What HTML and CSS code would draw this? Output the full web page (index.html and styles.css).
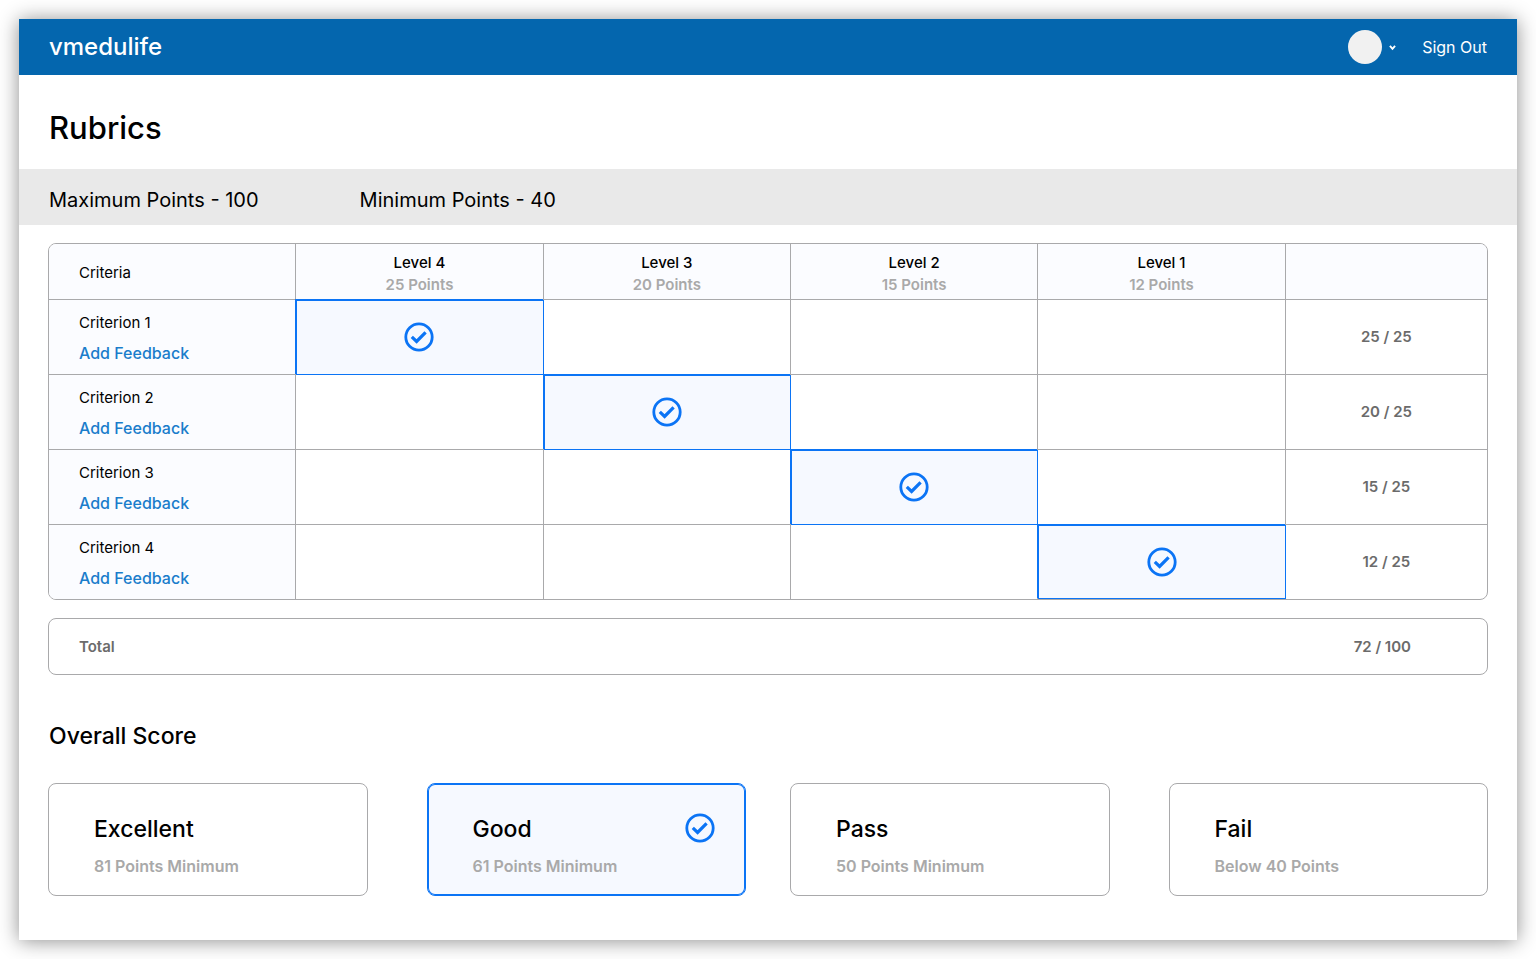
FILE: index.html
```
<!DOCTYPE html>
<html lang="en">
<head>
    <meta charset="UTF-8">
    <meta name="viewport" content="width=device-width, initial-scale=1.0">
    <title>Rubrics - vmedulife</title>
    <link rel="stylesheet" href="styles.css">
</head>
<body>
    <svg class="sprite" aria-hidden="true">
        <symbol id="check" viewBox="0 0 30 30">
            <circle cx="15" cy="15" r="13.2" />
            <path d="M7.8 14.8 L12.6 19.4 L21.6 10.4" stroke-width="3.2" />
        </symbol>
    </svg>

    <div class="page">
        <header class="topbar">
            <a href="#" class="brand">vmedulife</a>
            <nav class="account">
                <button type="button" class="profile" aria-label="Profile menu">
                    <span class="avatar"></span>
                    <svg class="caret" viewBox="0 0 6 6"><path d="M0.8 1.6 L3 4.2 L5.2 1.6" /></svg>
                </button>
                <a href="#" class="sign-out">Sign Out</a>
            </nav>
        </header>

        <main>
            <h1>Rubrics</h1>

            <div class="points-bar">
                <p>Maximum Points - 100</p>
                <p>Minimum Points - 40</p>
            </div>

            <div class="content">
                <table class="rubric">
                    <colgroup>
                        <col><col><col><col><col>
                        <col class="score-col">
                    </colgroup>
                    <thead>
                        <tr>
                            <th class="criterion" scope="col">Criteria</th>
                            <th scope="col">Level 4<span class="points">25 Points</span></th>
                            <th scope="col">Level 3<span class="points">20 Points</span></th>
                            <th scope="col">Level 2<span class="points">15 Points</span></th>
                            <th scope="col">Level 1<span class="points">12 Points</span></th>
                            <th></th>
                        </tr>
                    </thead>
                    <tbody>
                        <tr>
                            <th class="criterion" scope="row">Criterion 1<a href="#">Add Feedback</a></th>
                            <td><label class="level"><input type="radio" name="c1" aria-label="Level 4" checked><svg class="check"><use href="#check" /></svg></label></td>
                            <td><label class="level"><input type="radio" name="c1" aria-label="Level 3"><svg class="check"><use href="#check" /></svg></label></td>
                            <td><label class="level"><input type="radio" name="c1" aria-label="Level 2"><svg class="check"><use href="#check" /></svg></label></td>
                            <td><label class="level"><input type="radio" name="c1" aria-label="Level 1"><svg class="check"><use href="#check" /></svg></label></td>
                            <td class="score">25 / 25</td>
                        </tr>
                        <tr>
                            <th class="criterion" scope="row">Criterion 2<a href="#">Add Feedback</a></th>
                            <td><label class="level"><input type="radio" name="c2" aria-label="Level 4"><svg class="check"><use href="#check" /></svg></label></td>
                            <td><label class="level"><input type="radio" name="c2" aria-label="Level 3" checked><svg class="check"><use href="#check" /></svg></label></td>
                            <td><label class="level"><input type="radio" name="c2" aria-label="Level 2"><svg class="check"><use href="#check" /></svg></label></td>
                            <td><label class="level"><input type="radio" name="c2" aria-label="Level 1"><svg class="check"><use href="#check" /></svg></label></td>
                            <td class="score">20 / 25</td>
                        </tr>
                        <tr>
                            <th class="criterion" scope="row">Criterion 3<a href="#">Add Feedback</a></th>
                            <td><label class="level"><input type="radio" name="c3" aria-label="Level 4"><svg class="check"><use href="#check" /></svg></label></td>
                            <td><label class="level"><input type="radio" name="c3" aria-label="Level 3"><svg class="check"><use href="#check" /></svg></label></td>
                            <td><label class="level"><input type="radio" name="c3" aria-label="Level 2" checked><svg class="check"><use href="#check" /></svg></label></td>
                            <td><label class="level"><input type="radio" name="c3" aria-label="Level 1"><svg class="check"><use href="#check" /></svg></label></td>
                            <td class="score">15 / 25</td>
                        </tr>
                        <tr>
                            <th class="criterion" scope="row">Criterion 4<a href="#">Add Feedback</a></th>
                            <td><label class="level"><input type="radio" name="c4" aria-label="Level 4"><svg class="check"><use href="#check" /></svg></label></td>
                            <td><label class="level"><input type="radio" name="c4" aria-label="Level 3"><svg class="check"><use href="#check" /></svg></label></td>
                            <td><label class="level"><input type="radio" name="c4" aria-label="Level 2"><svg class="check"><use href="#check" /></svg></label></td>
                            <td><label class="level"><input type="radio" name="c4" aria-label="Level 1" checked><svg class="check"><use href="#check" /></svg></label></td>
                            <td class="score">12 / 25</td>
                        </tr>
                    </tbody>
                </table>

                <div class="total">
                    <span>Total</span>
                    <span>72 / 100</span>
                </div>

                <h2>Overall Score</h2>

                <div class="grades">
                    <div class="grade-pair">
                        <label class="grade">
                            <input type="radio" name="grade">
                            <span class="grade-text">
                                <span class="grade-name">Excellent</span>
                                <span class="grade-min">81 Points Minimum</span>
                            </span>
                            <svg class="check"><use href="#check" /></svg>
                        </label>
                        <label class="grade">
                            <input type="radio" name="grade" checked>
                            <span class="grade-text">
                                <span class="grade-name">Good</span>
                                <span class="grade-min">61 Points Minimum</span>
                            </span>
                            <svg class="check"><use href="#check" /></svg>
                        </label>
                    </div>
                    <div class="grade-pair">
                        <label class="grade">
                            <input type="radio" name="grade">
                            <span class="grade-text">
                                <span class="grade-name">Pass</span>
                                <span class="grade-min">50 Points Minimum</span>
                            </span>
                            <svg class="check"><use href="#check" /></svg>
                        </label>
                        <label class="grade">
                            <input type="radio" name="grade">
                            <span class="grade-text">
                                <span class="grade-name">Fail</span>
                                <span class="grade-min">Below 40 Points</span>
                            </span>
                            <svg class="check"><use href="#check" /></svg>
                        </label>
                    </div>
                </div>
            </div>
        </main>
    </div>
</body>
</html>
```
FILE: styles.css
```
* {
    margin: 0;
    padding: 0;
    box-sizing: border-box;
}

body {
    font-family: "Inter", sans-serif;
    font-size: 15px;
    line-height: 22px;
    color: #000;
    background-color: #fff;
    padding: 19px;
}

a {
    text-decoration: none;
}

.sprite {
    position: absolute;
    width: 0;
    height: 0;
}

.page {
    background-color: #fff;
    box-shadow: 0 1px 19px rgba(0, 0, 0, 0.45);
    padding-bottom: 44px;
}

/* top bar */
.topbar {
    display: flex;
    align-items: center;
    justify-content: space-between;
    height: 56px;
    padding: 0 30px;
    background-color: #0466ae;
}

.brand {
    color: #fff;
    font-size: 24px;
    font-weight: 500;
}

.account {
    display: flex;
    align-items: center;
    gap: 26px;
}

.profile {
    display: flex;
    align-items: center;
    gap: 7px;
    background: none;
    border: none;
    cursor: pointer;
}

.avatar {
    width: 34px;
    height: 34px;
    border-radius: 50%;
    background-color: #f1f1f1;
}

.caret {
    width: 7px;
    height: 7px;
    fill: none;
    stroke: #fff;
    stroke-width: 1.6;
}

.sign-out {
    color: #fff;
    font-size: 16px;
}

h1 {
    padding: 33px 30px 21px;
    font-size: 31px;
    font-weight: 500;
    line-height: 40px;
}

.points-bar {
    display: flex;
    align-items: center;
    gap: 101px;
    height: 56px;
    padding: 5px 30px 0;
    background-color: #e9e9e9;
    font-size: 20px;
}

.content {
    padding: 18px 29px 0;
}

/* rubric table */
.rubric {
    width: 100%;
    table-layout: fixed;
    border-collapse: separate;
    border-spacing: 0;
    border: 1px solid #a9a9ab;
    border-radius: 8px;
    overflow: hidden;
}

.score-col {
    width: 14%;
}

.rubric th,
.rubric td {
    border-right: 1px solid #a9a9ab;
    border-bottom: 1px solid #a9a9ab;
}

.rubric th:last-child,
.rubric td:last-child {
    border-right: none;
}

.rubric tbody tr:last-child > * {
    border-bottom: none;
}

.rubric th {
    background-color: #fbfcff;
    font-weight: 500;
}

.rubric thead th {
    height: 56px;
    padding-top: 4px;
}

.rubric .criterion {
    padding-top: 2px;
    padding-left: 30px;
    text-align: left;
    font-weight: 400;
}

.rubric .criterion a {
    display: block;
    margin-top: 8px;
    color: #1a7dcb;
    font-size: 16px;
    font-weight: 500;
}

.points {
    display: block;
    color: #a9a9a9;
    font-weight: 600;
}

.level {
    position: relative;
    display: flex;
    align-items: center;
    justify-content: center;
    height: 74px;
    cursor: pointer;
}

.level input,
.grade input {
    position: absolute;
    inset: 0;
    width: 100%;
    height: 100%;
    opacity: 0;
    cursor: pointer;
}

.rubric td:has(:checked) {
    background-color: #f6f9ff;
    border-color: #0b74f5;
    box-shadow: -1px -1px 0 #0b74f5, inset 1px 1px 0 #0b74f5;
}

.rubric tr:last-child td:has(:checked) {
    box-shadow: -1px -1px 0 #0b74f5, inset 1px 1px 0 #0b74f5, inset 0 -1px 0 #0b74f5;
}

.check {
    width: 30px;
    height: 30px;
    fill: none;
    stroke: #0b74f5;
    stroke-width: 2.8;
    visibility: hidden;
}

:checked ~ .check {
    visibility: visible;
}

.score {
    color: #6b6b6b;
    font-weight: 600;
    text-align: center;
}

.total {
    display: flex;
    align-items: center;
    justify-content: space-between;
    height: 57px;
    margin-top: 18px;
    padding: 0 76px 0 30px;
    border: 1px solid #a9a9ab;
    border-radius: 8px;
    color: #6b6b6b;
    font-weight: 600;
}

h2 {
    margin: 46px 0 32px;
    padding-left: 1px;
    font-size: 23px;
    font-weight: 500;
    line-height: 30px;
}

/* overall score cards */
.grades {
    display: grid;
    grid-template-columns: 1fr 1fr;
    gap: 44px;
}

.grade-pair {
    display: grid;
    grid-template-columns: 1fr 1fr;
    gap: 59px;
}

.grade {
    position: relative;
    display: flex;
    align-items: flex-start;
    justify-content: space-between;
    padding: 29px 30px 18px 45px;
    border: 1px solid #a9a9ab;
    border-radius: 8px;
    cursor: pointer;
}

.grade:has(:checked) {
    background-color: #f6f9ff;
    border-color: #0b74f5;
    box-shadow: inset 0 0 0 1px #0b74f5;
}

.grade-name,
.grade-min {
    display: block;
}

.grade-name {
    font-size: 23px;
    font-weight: 500;
    line-height: 32px;
}

.grade-min {
    margin-top: 10px;
    color: #a9a9a9;
    font-size: 16px;
    font-weight: 600;
}
```
